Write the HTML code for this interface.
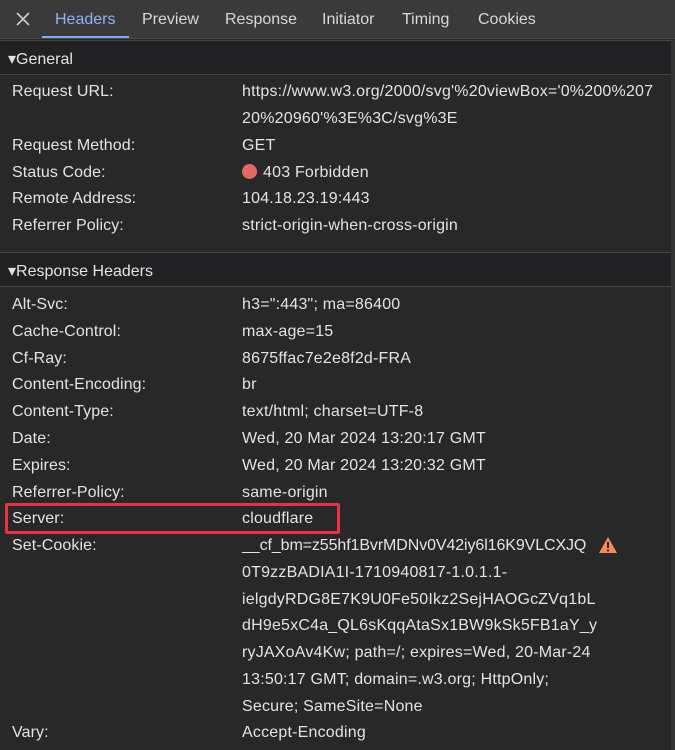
<!DOCTYPE html>
<html><head><meta charset="utf-8"><style>
*{margin:0;padding:0;box-sizing:border-box}
body{width:675px;height:750px;overflow:hidden;background:#282828;font-family:"Liberation Sans",sans-serif;font-size:16px;letter-spacing:0.2px;color:#e3e3e3;position:relative}
.tabs{position:absolute;left:0;top:0;width:675px;height:39px;background:#3a3a3a;border-bottom:1px solid #4a4a4a;letter-spacing:0}
.tab{position:absolute;top:11px;font-size:16px;color:#d8d8d8}
.x{position:absolute;left:15px;top:11px}
.ul{position:absolute;left:42px;top:36px;width:87px;height:2px;background:#7cacf8}
.sec{position:absolute;left:0;width:671px;height:35px;background:#212124;border-top:1px solid #444;border-bottom:1px solid #444;padding:8px 0 0 8px;font-size:16px;letter-spacing:0}
.r{position:absolute;left:12px;white-space:nowrap;letter-spacing:0.1px}
.v{position:absolute;left:242px;white-space:nowrap}
.sb{position:absolute;left:671px;top:40px;width:4px;height:710px;background:#333}
</style></head><body>
<div class="tabs">
<svg class="x" width="16" height="16" viewBox="0 0 16 16"><path d="M2 2L14 14M14 2L2 14" stroke="#ccc" stroke-width="1.6"/></svg>
<span class="tab" style="left:55px;color:#8ab4f8">Headers</span>
<span class="tab" style="left:142px">Preview</span>
<span class="tab" style="left:225px">Response</span>
<span class="tab" style="left:322px">Initiator</span>
<span class="tab" style="left:402px">Timing</span>
<span class="tab" style="left:478px">Cookies</span>
<div class="ul"></div>
</div>
<div class="sb"></div>
<div class="sec" style="top:40px">▾General</div>
<div class="r" style="top:83px">Request URL:</div><div class="v" style="top:83px">https://www.w3.org/2000/svg'%20viewBox='0%200%207</div>
<div class="v" style="top:110px">20%20960'%3E%3C/svg%3E</div>
<div class="r" style="top:137px">Request Method:</div><div class="v" style="top:137px">GET</div>
<div class="r" style="top:164px">Status Code:</div><div class="v" style="top:164px"><span style="display:inline-block;width:15px;height:15px;border-radius:50%;background:#e46962;vertical-align:-2px;margin-right:6px"></span>403 Forbidden</div>
<div class="r" style="top:190px">Remote Address:</div><div class="v" style="top:190px">104.18.23.19:443</div>
<div class="r" style="top:217px">Referrer Policy:</div><div class="v" style="top:217px">strict-origin-when-cross-origin</div>
<div class="sec" style="top:252px">▾Response Headers</div>
<div class="r" style="top:296px">Alt-Svc:</div><div class="v" style="top:296px">h3=":443"; ma=86400</div>
<div class="r" style="top:323px">Cache-Control:</div><div class="v" style="top:323px">max-age=15</div>
<div class="r" style="top:350px">Cf-Ray:</div><div class="v" style="top:350px">8675ffac7e2e8f2d-FRA</div>
<div class="r" style="top:376px">Content-Encoding:</div><div class="v" style="top:376px">br</div>
<div class="r" style="top:403px">Content-Type:</div><div class="v" style="top:403px">text/html; charset=UTF-8</div>
<div class="r" style="top:430px">Date:</div><div class="v" style="top:430px">Wed, 20 Mar 2024 13:20:17 GMT</div>
<div class="r" style="top:457px">Expires:</div><div class="v" style="top:457px">Wed, 20 Mar 2024 13:20:32 GMT</div>
<div class="r" style="top:484px">Referrer-Policy:</div><div class="v" style="top:484px">same-origin</div>
<div style="position:absolute;left:5px;top:503px;width:335px;height:31px;border:3px solid #e8323f;border-radius:2px"></div>
<div class="r" style="top:510px">Server:</div><div class="v" style="top:510px">cloudflare</div>
<div class="r" style="top:537px">Set-Cookie:</div><div class="v" style="top:537px;letter-spacing:-0.1px">__cf_bm=z55hf1BvrMDNv0V42iy6l16K9VLCXJQ</div>
<svg style="position:absolute;left:598px;top:536px" width="20" height="18" viewBox="0 0 20 18"><path d="M10 1L19 17H1Z" fill="#f28b54"/><rect x="9" y="6" width="2" height="6" fill="#282828"/><rect x="9" y="13.5" width="2" height="2" fill="#282828"/></svg>
<div class="v" style="top:564px">0T9zzBADIA1I-1710940817-1.0.1.1-</div>
<div class="v" style="top:591px">ielgdyRDG8E7K9U0Fe50Ikz2SejHAOGcZVq1bL</div>
<div class="v" style="top:617px">dH9e5xC4a_QL6sKqqAtaSx1BW9kSk5FB1aY_y</div>
<div class="v" style="top:644px">ryJAXoAv4Kw; path=/; expires=Wed, 20-Mar-24</div>
<div class="v" style="top:671px">13:50:17 GMT; domain=.w3.org; HttpOnly;</div>
<div class="v" style="top:698px">Secure; SameSite=None</div>
<div class="r" style="top:724px">Vary:</div><div class="v" style="top:724px">Accept-Encoding</div>
</body></html>
